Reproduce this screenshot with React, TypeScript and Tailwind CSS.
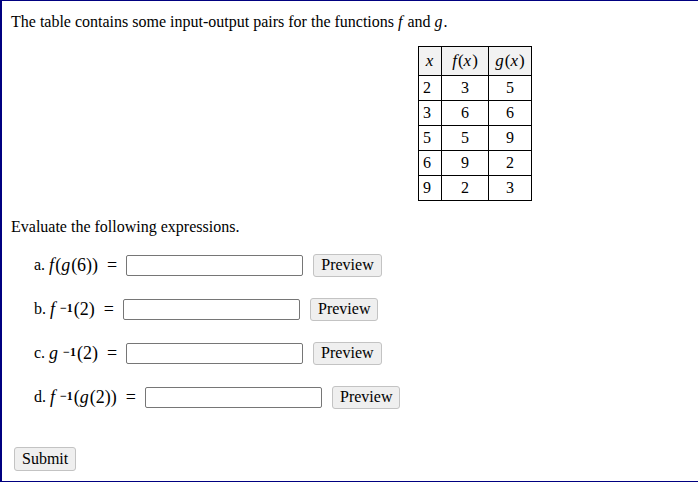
const SERIF = "font-['Liberation_Serif','Times_New_Roman',serif]";

function Mi({ children }: { children: React.ReactNode }) {
  return <span className={`${SERIF} italic pr-[1px]`}>{children}</span>;
}

function Inv() {
  return <sup className={`${SERIF} relative -top-[3px] ml-[4px] mr-[1px] text-[12px] font-bold`}>−1</sup>;
}

const rows = [
  [2, 3, 5],
  [3, 6, 6],
  [5, 5, 9],
  [6, 9, 2],
  [9, 2, 3],
];

function AnswerRow({ label, math }: { label: string; math: React.ReactNode }) {
  return (
    <div className={`${SERIF} flex items-center h-[44px] pl-[32px]`}>
      <span className="text-[16px] text-black mr-[4px]">{label}</span>
      <span className="text-[18px] text-black">{math}</span>
      <span className="text-[18px] mx-[9px]">=</span>
      <input type="text" className="w-[177px] h-[21px] border border-[#767676] rounded-[2px] bg-white" />
      <button
        className={`${SERIF} ml-[10px] h-[23px] px-[7px] text-[16px] bg-[#efefef] border border-[#c3c3c3] rounded-[3px] text-black leading-none`}
      >
        Preview
      </button>
    </div>
  );
}

export default function App() {
  return (
    <div className={`${SERIF} w-[698px] h-[483px] bg-white overflow-hidden`}>
      <div className="h-[482px] border-t border-b border-l-2 border-[#000080] text-black">
        <p className="text-[16px] pl-[9px] pt-[11px] leading-[19px]">
          The table contains some input-output pairs for the functions <Mi>f</Mi> and <Mi>g</Mi>.
        </p>

        <table className={`${SERIF} ml-[416px] mt-[15px] border-collapse border border-black text-[16px]`}>
          <thead>
            <tr className="bg-[#f2f2f2] h-[29px]">
              <th className={`${SERIF} border border-black w-[23px] font-normal text-[17px]`}><Mi>x</Mi></th>
              <th className={`${SERIF} border border-black w-[47px] font-normal text-[17px]`}><Mi>f</Mi>(<Mi>x</Mi>)</th>
              <th className={`${SERIF} border border-black w-[43px] font-normal text-[17px]`}><Mi>g</Mi>(<Mi>x</Mi>)</th>
            </tr>
          </thead>
          <tbody>
            {rows.map((r, i) => (
              <tr key={i} className="h-[24.8px]">
                <td className={`${SERIF} text-[16px] border border-black pl-[4px] text-left`}>{r[0]}</td>
                <td className={`${SERIF} text-[16px] border border-black text-center`}>{r[1]}</td>
                <td className={`${SERIF} text-[16px] border border-black text-center`}>{r[2]}</td>
              </tr>
            ))}
          </tbody>
        </table>

        <p className="text-[16px] pl-[9px] mt-[16px] leading-[19px]">Evaluate the following expressions.</p>

        <div className="mt-[7px]">
          <AnswerRow label="a." math={<><Mi>f</Mi>(<Mi>g</Mi>(6))</>} />
          <AnswerRow label="b." math={<><Mi>f</Mi><Inv />(2)</>} />
          <AnswerRow label="c." math={<><Mi>g</Mi><Inv />(2)</>} />
          <AnswerRow label="d." math={<><Mi>f</Mi><Inv />(<Mi>g</Mi>(2))</>} />
        </div>

        <button
          className={`${SERIF} ml-[12px] mt-[28px] h-[24px] px-[7px] text-[16px] bg-[#efefef] border border-[#c3c3c3] rounded-[3px] leading-none`}
        >
          Submit
        </button>
      </div>
    </div>
  );
}
